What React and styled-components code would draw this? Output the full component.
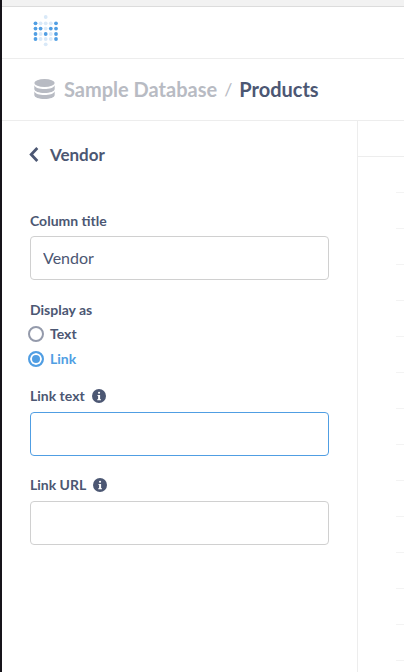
import React from "react";
import styled, { createGlobalStyle } from "styled-components";

const GlobalStyle = createGlobalStyle`
  html, body {
    margin: 0;
    height: 100%;
    background: #fff;
    font-family: Lato, "Noto Sans", sans-serif;
    overflow: hidden;
  }
  #root {
    height: 100%;
  }
`;

const logoRows = ["..#..", "#...#", "##.##", "#.#.#", "#...#", "..#.."];
const ROW_Y = [2, 8.3, 13.6, 19, 24, 29.3];
const COL_X = [2.5, 7.6, 12.7, 17.8, 23];

function Logo() {
  return (
    <svg width="26" height="32" viewBox="0 0 26 32">
      {logoRows.map((row, r) =>
        row.split("").map((c, i) => {
          const edge = r === 0 || r === 5;
          if (edge && i !== 2) return null;
          return (
            <circle
              key={r + "-" + i}
              cx={COL_X[i]}
              cy={ROW_Y[r]}
              r={1.9}
              fill={c === "#" && !edge ? "#509ee3" : "#d9e9f8"}
            />
          );
        })
      )}
    </svg>
  );
}

function DatabaseIcon() {
  return (
    <svg width="21" height="20" viewBox="0 0 21 20">
      <ellipse cx="10.500" cy="4" rx="10.200" ry="4" fill="#b8bbc3" />
      <path
        d="M.3 6.2C1.500 8.900 5.600 10 10.500 10s9-1.100 10.200-3.800V10c0 2.400-4.600 4-10.200 4S.3 12.400.3 10z"
        fill="#b8bbc3"
      />
      <path
        d="M.3 12.200C1.500 14.900 5.600 16 10.500 16s9-1.100 10.200-3.800V16c0 2.400-4.600 4-10.200 4S.3 18.400.3 16z"
        fill="#b8bbc3"
      />
    </svg>
  );
}

function InfoIcon() {
  return (
    <svg width="14" height="14" viewBox="0 0 14 14">
      <circle cx="7" cy="7" r="7" fill="#4c5773" />
      <rect x="6" y="2.700" width="2.100" height="2.100" rx="1" fill="#fff" />
      <path d="M5.500 6h2.600v4.200h.9v1H5.200v-1h.9V7h-.6z" fill="#fff" />
    </svg>
  );
}

function ChevronLeft() {
  return (
    <svg width="10" height="15" viewBox="0 0 10 15">
      <path d="M8.300 1 2.200 7.500 8.300 14" fill="none" stroke="#4c5773" strokeWidth="2.800" />
    </svg>
  );
}

const Page = styled.div`
  height: 672px;
  border-left: 2px solid #16141a;
  display: flex;
  flex-direction: column;
  color: #4c5773;
`;

const BrowserStrip = styled.div`
  height: 6px;
  background: #f2f2f2;
  border-bottom: 1px solid #dcdcdc;
`;

const LogoBar = styled.header`
  height: 43px;
  padding: 8px 0 0 31px;
  border-bottom: 1px solid #ededed;
  display: flex;
  align-items: flex-start;
  flex-shrink: 0;
`;

const Breadcrumbs = styled.nav`
  flex-shrink: 0;
  border-bottom: 1px solid #ededed;
  display: flex;
  align-items: center;
  padding-left: 32px;
  padding-bottom: 2px;
  box-sizing: border-box;
  height: 62px;
  font-size: 20px;
  font-weight: 700;
`;

const Crumb = styled.span`
  color: ${(p) => (p.$muted ? "#b8bbc3" : "#4c5773")};
`;

const CrumbIcon = styled.span`
  display: flex;
  margin-right: 9px;
`;

const Separator = styled.span`
  color: #b8bbc3;
  font-weight: 400;
  font-size: 18px;
  margin: 0 7px 0 7px;
`;

const Body = styled.div`
  flex: 1;
  display: flex;
  min-height: 0;
`;

const Sidebar = styled.aside`
  width: 356px;
  flex-shrink: 0;
  box-sizing: border-box;
  border-right: 1px solid #ededed;
  padding: 23px 28px 0 28px;
`;

const BackRow = styled.div`
  display: flex;
  align-items: center;
  gap: 11px;
  height: 20px;
  font-size: 17px;
  font-weight: 700;
  margin-bottom: 48px;
  margin-left: -1px;
`;

const Field = styled.div`
  margin-bottom: ${(p) => p.$gap || 0}px;
`;

const Label = styled.div`
  display: flex;
  align-items: center;
  gap: 7px;
  font-size: 14px;
  font-weight: 700;
  line-height: 17px;
  margin-bottom: ${(p) => p.$gap ?? 7}px;
`;

const Input = styled.input`
  display: block;
  width: 100%;
  height: 44px;
  box-sizing: border-box;
  border: 1px solid ${(p) => (p.$focused ? "#509ee3" : "#d0d0d0")};
  border-radius: 4px;
  padding: 0 12px 2px;
  font-family: inherit;
  font-size: 16px;
  color: #4c5773;
  outline: none;
  background: #fff;
`;

const RadioRow = styled.div`
  display: flex;
  align-items: center;
  gap: 6px;
  height: 25px;
  font-size: 14px;
  font-weight: 700;
  color: ${(p) => (p.$active ? "#509ee3" : "#4c5773")};
`;

const RadioDot = styled.span`
  width: 16px;
  height: 16px;
  box-sizing: border-box;
  border-radius: 50%;
  margin-left: -2px;
  border: 2px solid ${(p) => (p.$active ? "#509ee3" : "#949aab")};
  background: ${(p) => (p.$active ? "#509ee3" : "#fff")};
  box-shadow: ${(p) => (p.$active ? "inset 0 0 0 2px #fff" : "none")};
`;

const TablePane = styled.div`
  flex: 1;
  display: flex;
  flex-direction: column;
`;

const TableHead = styled.div`
  height: 35px;
  flex-shrink: 0;
  border-bottom: 1px solid #ededed;
`;

const TableRow = styled.div`
  height: 36px;
  box-sizing: border-box;
  flex-shrink: 0;
  position: relative;
  &::after {
    content: "";
    position: absolute;
    right: 0;
    bottom: 0;
    width: 8px;
    height: 1px;
    background: #f3f3f3;
  }
`;

export default function App() {
  return (
    <>
      <GlobalStyle />
      <Page>
        <BrowserStrip />
        <LogoBar>
          <Logo />
        </LogoBar>
        <Breadcrumbs>
          <CrumbIcon>
            <DatabaseIcon />
          </CrumbIcon>
          <Crumb $muted>Sample Database</Crumb>
          <Separator>/</Separator>
          <Crumb>Products</Crumb>
        </Breadcrumbs>
        <Body>
          <Sidebar>
            <BackRow>
              <ChevronLeft />
              Vendor
            </BackRow>
            <Field $gap={21}>
              <Label>Column title</Label>
              <Input defaultValue="Vendor" />
            </Field>
            <Field $gap={16}>
              <Label $gap={3}>Display as</Label>
              <RadioRow>
                <RadioDot />
                Text
              </RadioRow>
              <RadioRow $active>
                <RadioDot $active />
                Link
              </RadioRow>
            </Field>
            <Field $gap={20}>
              <Label $gap={8}>
                Link text
                <InfoIcon />
              </Label>
              <Input $focused />
            </Field>
            <Field>
              <Label $gap={8}>
                Link URL
                <InfoIcon />
              </Label>
              <Input />
            </Field>
          </Sidebar>
          <TablePane>
            <TableHead />
            {Array.from({ length: 14 }).map((_, i) => (
              <TableRow key={i} />
            ))}
          </TablePane>
        </Body>
      </Page>
    </>
  );
}
